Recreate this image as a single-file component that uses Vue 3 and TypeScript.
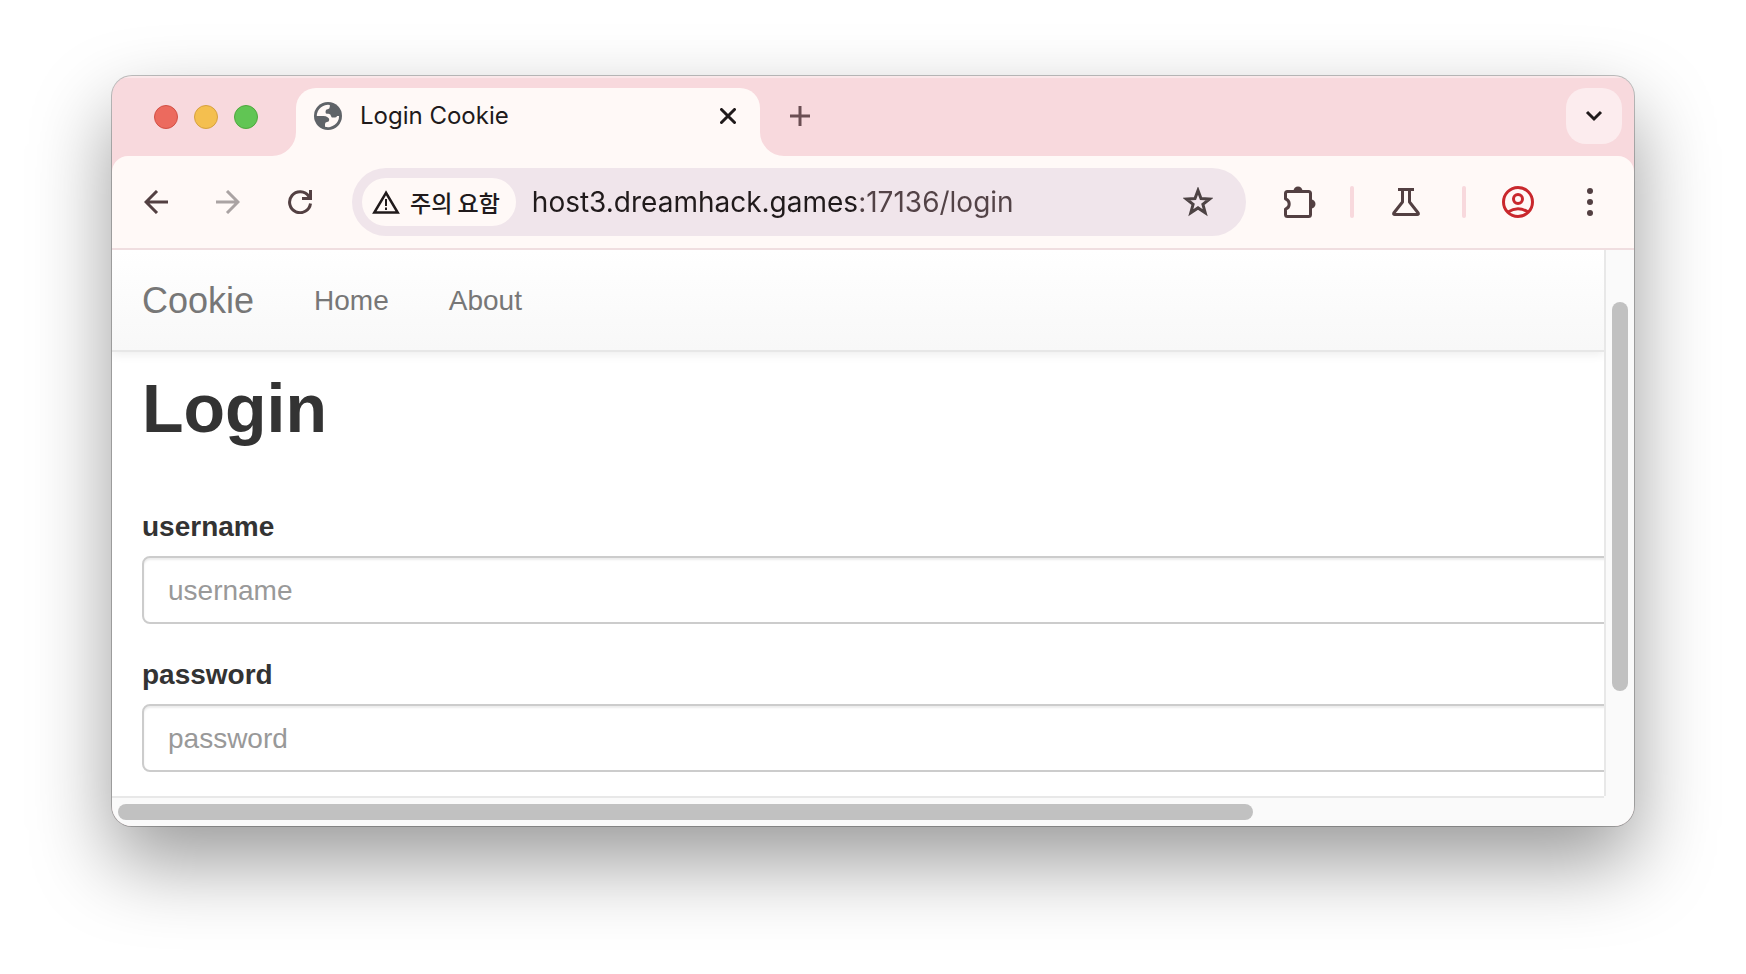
<script setup lang="ts">
import { ref } from 'vue'

interface Field {
  id: string
  label: string
  type: string
}

const address = ref<string>('host3.dreamhack.games:17136/login')
const links: string[] = ['Home', 'About']
const fields: Field[] = [
  { id: 'username', label: 'username', type: 'text' },
  { id: 'password', label: 'password', type: 'password' },
]
</script>

<template>
  <main class="desktop">
    <section class="window">
      <header class="tabstrip">
        <div class="lights">
          <button class="light red" aria-label="Close window"></button>
          <button class="light yellow" aria-label="Minimise window"></button>
          <button class="light green" aria-label="Zoom window"></button>
        </div>
        <div class="tab">
          <svg class="flare flare-left" viewBox="0 0 24 24" aria-hidden="true"><path d="M24 0v24H0A24 24 0 0 0 24 0z" /></svg>
          <svg class="globe" viewBox="0 0 28 28" aria-hidden="true">
            <circle cx="14" cy="14" r="14" fill="#5f6368" />
            <path fill="#fff8f6" d="M2.800 14A11.200 11.200 0 0 1 15.800 3v1.800q0 2.200-2.200 2.400-2 .2-2 2v1.200q0 1.400 1.400 1.400h1.500q2.300.2 2.700 2.600.4 1.200 1.800 1.200h1.800q1.600 0 2.300-1.600h2A11.200 11.200 0 0 1 11 24.800V22q.2-1.800 2-1.900 2-.2 2.200-2.100.2-2-1.700-2.700Q12 14 9.500 14z" />
          </svg>
          <span class="tab-title">Login Cookie</span>
          <button class="bare tab-close" aria-label="Close tab">
            <svg width="16" height="16" viewBox="0 0 16 16"><path d="M1.500 1.500l13 13M14.500 1.500l-13 13" fill="none" stroke="#201a1b" stroke-width="3" stroke-linecap="round" /></svg>
          </button>
          <svg class="flare flare-right" viewBox="0 0 24 24" aria-hidden="true"><path d="M0 0v24h24A24 24 0 0 1 0 0z" /></svg>
        </div>
        <button class="bare new-tab" aria-label="New tab">
          <svg width="20" height="20" viewBox="0 0 20 20"><path d="M10 0v20M0 10h20" stroke="#6b4e53" stroke-width="3" /></svg>
        </button>
        <button class="bare tab-search" aria-label="Search tabs">
          <svg width="18" height="12" viewBox="0 0 18 12"><path d="M2 2l7 7 7-7" fill="none" stroke="#201a1b" stroke-width="3" /></svg>
        </button>
      </header>

      <nav class="toolbar" aria-label="Browser">
        <div class="history">
          <button class="bare" aria-label="Back">
            <svg width="24" height="24" viewBox="0 0 24 24"><path d="M24 12H2M13 1L2 12l11 11" fill="none" stroke="#534042" stroke-width="3" /></svg>
          </button>
          <button class="bare" aria-label="Forward">
            <svg width="24" height="24" viewBox="0 0 24 24"><path d="M0 12h22M11 1l11 11-11 11" fill="none" stroke="#aaa3a3" stroke-width="3" /></svg>
          </button>
          <button class="bare" aria-label="Reload">
            <svg width="24" height="24" viewBox="0 0 24 24"><path d="M22.500 13.500A10.500 10.500 0 1 1 20.800 6.300L22 8M22.500 0v8.500H14" fill="none" stroke="#534042" stroke-width="3" /></svg>
          </button>
        </div>
        <div class="omnibox">
          <button class="bare chip">
            <svg width="28" height="24" viewBox="0 0 28 24" aria-hidden="true"><path d="M14 2.800L2.300 22.500h23.400z" fill="none" stroke="#201a1b" stroke-width="2.500" /><path d="M14 9v7M14 17.500V20" stroke="#201a1b" stroke-width="2" /></svg>
            <span>주의 요함</span>
          </button>
          <input v-model="address" class="address" type="text" aria-label="Address" spellcheck="false" />
          <button class="bare" aria-label="Bookmark">
            <svg width="30" height="30" viewBox="0 0 30 30"><path d="M15 3.500l3 8.100 8.600.4-6.700 5.300 2.300 8.400L15 20.900l-7.200 4.800 2.300-8.400L3.400 12l8.600-.4z" fill="none" stroke="#4d4344" stroke-width="3" /></svg>
          </button>
        </div>
        <div class="tools">
          <button class="bare" aria-label="Extensions">
            <svg width="32" height="32" viewBox="0 0 32 32"><path d="M3.500 5.500h21q2 0 2 2v21q0 2-2 2h-21q-2 0-2-2v-5.300a5.500 5.500 0 0 0 0-10.400V7.500q0-2 2-2z" fill="none" stroke="#534042" stroke-width="3" stroke-linejoin="round" /><path d="M9.500 5a4.500 4.500 0 0 1 9 0zM27 13.500a4.500 4.500 0 0 1 0 9z" fill="#534042" /></svg>
          </button>
          <span class="divider"></span>
          <button class="bare labs" aria-label="Labs">
            <svg width="28" height="28" viewBox="0 0 28 28"><path d="M6 1.500h16M10.500 1.500v12.500L1.800 25q-.6 1.500 1 1.500h22.400q1.600 0 1-1.500L17.500 14V1.500" fill="none" stroke="#534042" stroke-width="3" stroke-linejoin="round" /></svg>
          </button>
          <span class="divider"></span>
          <button class="bare" aria-label="Profile">
            <svg width="32" height="32" viewBox="0 0 32 32"><g fill="none" stroke="#c9282d" stroke-width="3"><circle cx="16" cy="16" r="14.500" /><circle cx="16" cy="13" r="4.500" /><path d="M6 26q10-6.500 20 0" /></g></svg>
          </button>
          <button class="bare menu" aria-label="Menu">
            <svg width="6" height="28" viewBox="0 0 6 28"><g fill="#534042"><circle cx="3" cy="3" r="3" /><circle cx="3" cy="14" r="3" /><circle cx="3" cy="25" r="3" /></g></svg>
          </button>
        </div>
      </nav>

      <div class="viewport">
        <div class="page">
          <nav class="navbar" aria-label="Site">
            <a class="brand" href="#">Cookie</a>
            <a v-for="link in links" :key="link" class="nav-link" href="#">{{ link }}</a>
          </nav>
          <form class="login" @submit.prevent>
            <h1>Login</h1>
            <div v-for="field in fields" :key="field.id" class="group">
              <label :for="field.id">{{ field.label }}</label>
              <input :id="field.id" :type="field.type" :placeholder="field.label" />
            </div>
          </form>
        </div>
        <div class="track-y"><span class="thumb-y"></span></div>
        <div class="track-x"><span class="thumb-x"></span></div>
      </div>
    </section>
  </main>
</template>

<style>
body {
  margin: 0;
  background: #fff;
}
</style>

<style scoped>
* {
  box-sizing: border-box;
}

.desktop {
  min-height: 100vh;
  padding: 76px 112px 148px;
  overflow: hidden;
}

.window {
  border-radius: 20px;
  overflow: hidden;
  background: #f8d9dd;
  box-shadow: 0 0 0 1px rgba(0, 0, 0, 0.24), 0 36px 80px rgba(0, 0, 0, 0.4);
}

.bare {
  display: flex;
  align-items: center;
  justify-content: center;
  flex: none;
  padding: 0;
  border: 0;
  background: none;
  color: inherit;
}

.tabstrip {
  display: flex;
  align-items: center;
  height: 80px;
  box-shadow: inset 0 2px 1px rgba(255, 255, 255, 0.4);
}

.lights {
  display: flex;
  gap: 16px;
  margin: 2px 38px 0 42px;
}

.light {
  width: 24px;
  height: 24px;
  padding: 0;
  border: 1px solid;
  border-radius: 50%;
}

.red {
  background: #ec6a5e;
  border-color: #d25045;
}

.yellow {
  background: #f4bf4f;
  border-color: #d6a140;
}

.green {
  background: #61c554;
  border-color: #4fa73e;
}

.tab {
  position: relative;
  display: flex;
  align-items: center;
  align-self: flex-end;
  width: 464px;
  height: 68px;
  padding: 0 24px 12px 18px;
  border-radius: 20px 20px 0 0;
  background: #fff9f7;
}

.flare {
  position: absolute;
  bottom: 0;
  width: 24px;
  height: 24px;
  fill: #fff9f7;
}

.flare-left {
  right: 100%;
}

.flare-right {
  left: 100%;
}

.globe {
  width: 28px;
  height: 28px;
}

.tab-title {
  flex: 1;
  margin-left: 18px;
  color: #201a1b;
  font: 24px/32px Inter, sans-serif;
}

.new-tab {
  margin-left: 30px;
}

.tab-search {
  width: 56px;
  height: 56px;
  margin: 0 12px 0 auto;
  border-radius: 20px;
  background: #fcecee;
}

.toolbar {
  display: flex;
  align-items: center;
  height: 94px;
  padding: 0 41px 0 32px;
  border-bottom: 2px solid #f0dee0;
  border-radius: 16px 16px 0 0;
  background: #fff9f7;
}

.history {
  display: flex;
  gap: 48px;
}

.omnibox {
  display: flex;
  flex: 1;
  align-items: center;
  height: 68px;
  margin: 0 38px 0 40px;
  padding: 0 33px 0 10px;
  border-radius: 34px;
  background: #f0e5eb;
}

.chip {
  gap: 10px;
  height: 48px;
  padding: 0 16px 0 10px;
  border-radius: 24px;
  background: #fff9f7;
  color: #201a1b;
  font: 500 23px/32px "Noto Sans CJK KR", sans-serif;
}

.address {
  flex: 1;
  min-width: 0;
  height: 40px;
  margin-left: 16px;
  padding: 0;
  border: 0;
  outline: 0;
  background: linear-gradient(to right, #201a1b 325px, #534347 325px);
  background-clip: text;
  color: transparent;
  font: 28px/40px Inter, sans-serif;
}

.tools {
  display: flex;
  align-items: center;
}

.divider {
  width: 4px;
  height: 32px;
  margin: 0 36px 0 34px;
  border-radius: 2px;
  background: #f8d9dd;
}

.labs {
  width: 38px;
  padding-right: 6px;
}

.menu {
  margin-left: 53px;
}

.viewport {
  display: grid;
  grid-template-columns: minmax(0, 1fr) 30px;
  background: #fafafa;
}

.page {
  overflow: hidden;
  background: #fff;
  font-family: "Liberation Sans", Arial, sans-serif;
}

.navbar {
  display: flex;
  align-items: center;
  height: 102px;
  padding-top: 2px;
  border-bottom: 2px solid #e7e7e7;
  background: linear-gradient(#fff, #f8f8f8);
  box-shadow: 0 2px 10px rgba(0, 0, 0, 0.08);
}

.navbar a {
  padding: 0 30px;
  color: #777;
  line-height: 40px;
  text-decoration: none;
}

.brand {
  font-size: 36px;
}

.nav-link {
  font-size: 28px;
}

.login {
  width: 120%;
  padding: 16px 30px 24px;
}

h1 {
  margin: 0 0 58px;
  color: #333;
  font-size: 68px;
  line-height: 80px;
}

.group + .group {
  margin-top: 30px;
}

.group label {
  display: block;
  margin-bottom: 8px;
  color: #333;
  font-size: 28px;
  font-weight: 700;
  line-height: 42px;
}

.group input {
  display: block;
  width: 100%;
  height: 68px;
  padding: 2px 24px 0;
  border: 2px solid #ccc;
  border-radius: 8px;
  box-shadow: inset 0 2px 2px rgba(0, 0, 0, 0.08);
  color: #555;
  font: 28px/40px "Liberation Sans", Arial, sans-serif;
}

.group input::placeholder {
  color: #999;
  opacity: 1;
}

.track-y {
  display: flex;
  flex-direction: column;
  align-items: center;
  border-left: 2px solid #e8e8e8;
}

.track-y::before {
  content: "";
  flex: 52;
}

.track-y::after {
  content: "";
  flex: 105;
}

.thumb-y {
  flex: 389;
  width: 16px;
  border-radius: 8px;
  background: #c1c1c1;
}

.track-x {
  height: 30px;
  padding: 6px;
  border-top: 2px solid #e8e8e8;
}

.thumb-x {
  display: block;
  width: 76.7%;
  height: 16px;
  border-radius: 8px;
  background: #c1c1c1;
}
</style>
